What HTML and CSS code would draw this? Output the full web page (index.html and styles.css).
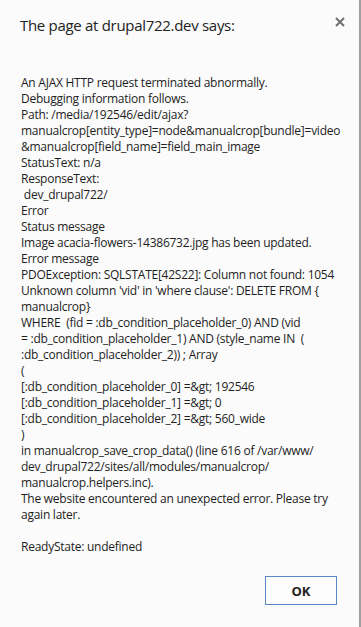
FILE: index.html
```html
<!DOCTYPE html>
<html lang="en">
<head>
    <meta charset="UTF-8">
    <meta name="viewport" content="width=device-width, initial-scale=1.0">
    <title>The page at drupal722.dev says:</title>
    <link rel="stylesheet" href="styles.css">
</head>
<body>
    <div class="dialog">
        <div class="dialog-header">
            <div class="dialog-title">The page at drupal722.dev says:</div>
            <button class="close-btn" aria-label="Close">
                <svg width="10" height="10" viewBox="0 0 10 10">
                    <path d="M1 1 L9 9 M9 1 L1 9" stroke="#6f6f6f" stroke-width="2"/>
                </svg>
            </button>
        </div>

        <div class="message">An AJAX HTTP request terminated abnormally.<br>Debugging information follows.<br>Path: /media/192546/edit/ajax?<br>manualcrop[entity_type]=node&amp;manualcrop[bundle]=video<br>&amp;manualcrop[field_name]=field_main_image<br>StatusText: n/a<br>ResponseText:<br>&nbsp;dev_drupal722/<br>Error<br>Status message<br>Image acacia-flowers-14386732.jpg has been updated.<br>Error message<br>PDOException: SQLSTATE[42S22]: Column not found: 1054<br>Unknown column 'vid' in 'where clause': DELETE FROM {<br>manualcrop}<br>WHERE&nbsp; (fid = :db_condition_placeholder_0) AND (vid<br>= :db_condition_placeholder_1) AND (style_name IN&nbsp; (<br>:db_condition_placeholder_2)) ; Array<br>(<br>[:db_condition_placeholder_0] =&amp;gt; 192546<br>[:db_condition_placeholder_1] =&amp;gt; 0<br>[:db_condition_placeholder_2] =&amp;gt; 560_wide<br>)<br>in manualcrop_save_crop_data() (line 616 of /var/www/<br>dev_drupal722/sites/all/modules/manualcrop/<br>manualcrop.helpers.inc).<br>The website encountered an unexpected error. Please try<br>again later.<br><br>ReadyState: undefined</div>

        <div class="dialog-footer">
            <button class="ok-btn">OK</button>
        </div>
    </div>
</body>
</html>
```

FILE: styles.css
```css
body {
    margin: 0;
    background: #fbfbfb;
    font-family: "Open Sans", "Noto Sans", sans-serif;
    color: #1e1e1e;
}
.dialog {
    width: 359px;
    height: 627px;
    border-right: 2px solid #a0a0a0;
    background: #fbfbfb;
    overflow: hidden;
}
.dialog-header {
    display: flex;
    justify-content: space-between;
    align-items: flex-start;
    padding: 14px 9px 0 20px;
    height: 58px;
    box-sizing: border-box;
}
.dialog-title {
    font-size: 15px;
    line-height: 22px;
    letter-spacing: -0.3px;
    color: #222;
}
.close-btn {
    border: none;
    background: none;
    padding: 0;
    margin-top: -2px;
    width: 20px;
    height: 20px;
    cursor: pointer;
}
.message {
    padding: 17px 0 0 21px;
    font-size: 12px;
    line-height: 16px;
    letter-spacing: -0.25px;
    white-space: nowrap;
}
.dialog-footer {
    display: flex;
    justify-content: flex-end;
    padding: 21px 22px 0 0;
}
.ok-btn {
    width: 72px;
    height: 29px;
    border: 1px solid #5b86c4;
    background: #fdfdfd;
    font-family: "Open Sans", "Noto Sans", sans-serif;
    font-size: 13px;
    font-weight: bold;
    color: #222;
}
```
